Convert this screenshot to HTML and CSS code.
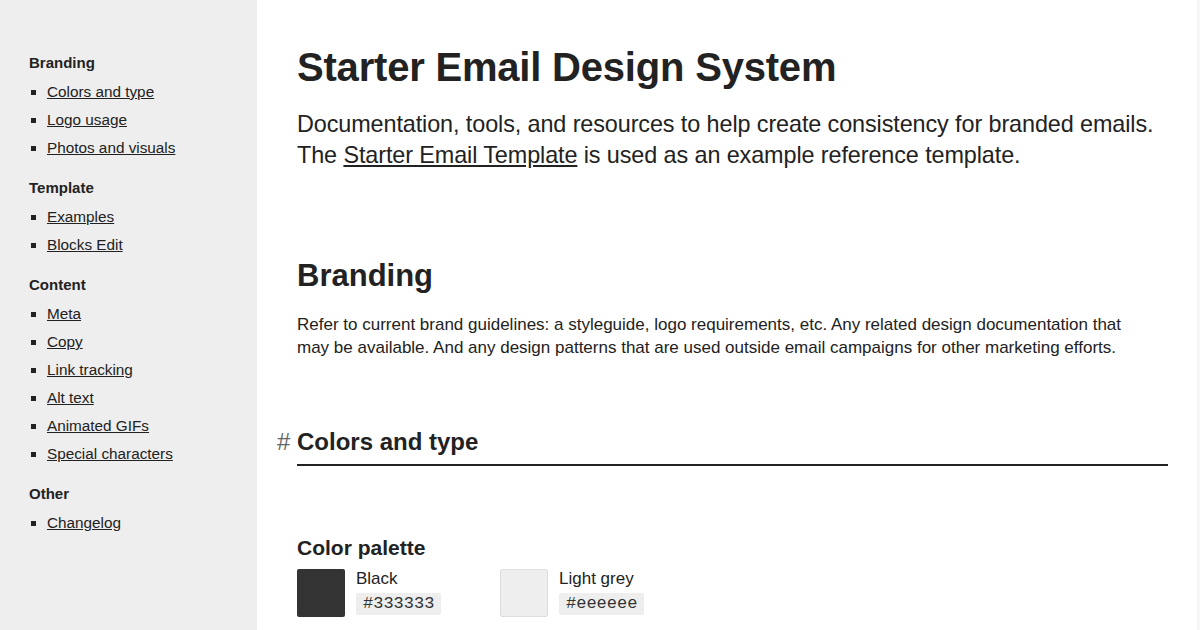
FILE: index.html
```html
<!DOCTYPE html>
<html>
<head>
<meta charset="UTF-8">
<title>Starter Email Design System</title>
<link rel="stylesheet" href="styles.css">
</head>
<body>
<div class="page">
  <nav class="sidebar">
    <h4>Branding</h4>
    <ul>
      <li><a href="#colors">Colors and type</a></li>
      <li><a href="#logo">Logo usage</a></li>
      <li><a href="#photos">Photos and visuals</a></li>
    </ul>
    <h4>Template</h4>
    <ul>
      <li><a href="#examples">Examples</a></li>
      <li><a href="#blocks">Blocks Edit</a></li>
    </ul>
    <h4>Content</h4>
    <ul>
      <li><a href="#meta">Meta</a></li>
      <li><a href="#copy">Copy</a></li>
      <li><a href="#tracking">Link tracking</a></li>
      <li><a href="#alt">Alt text</a></li>
      <li><a href="#gifs">Animated GIFs</a></li>
      <li><a href="#chars">Special characters</a></li>
    </ul>
    <h4>Other</h4>
    <ul>
      <li><a href="#changelog">Changelog</a></li>
    </ul>
  </nav>

  <main class="content">
    <h1>Starter Email Design System</h1>
    <p class="lead">Documentation, tools, and resources to help create consistency for branded emails.<br>
      The <a href="#template">Starter Email Template</a> is used as an example reference template.</p>

    <h2>Branding</h2>
    <p class="text">Refer to current brand guidelines: a styleguide, logo requirements, etc. Any related design documentation that
      may be available. And any design patterns that are used outside email campaigns for other marketing efforts.</p>

    <h3 id="colors"><a class="anchor" href="#colors">#</a>Colors and type</h3>

    <h4 class="sub">Color palette</h4>
    <div class="swatches">
      <div class="swatch">
        <span class="chip chip-black"></span>
        <div class="swatch-info">
          <span class="swatch-name">Black</span>
          <code>#333333</code>
        </div>
      </div>
      <div class="swatch">
        <span class="chip chip-grey"></span>
        <div class="swatch-info">
          <span class="swatch-name">Light grey</span>
          <code>#eeeeee</code>
        </div>
      </div>
    </div>
  </main>
</div>
</body>
</html>
```

FILE: styles.css
```css
body {
  margin: 0;
  font-family: "Liberation Sans", Arial, Helvetica, sans-serif;
  color: #222;
  background: #fff;
}

a {
  color: #222;
  text-decoration: underline;
}

.page {
  display: flex;
  min-height: 630px;
  border-right: 3px solid #f6f6f6;
}

/* sidebar navigation */
.sidebar {
  flex: 0 0 257px;
  box-sizing: border-box;
  background: #eeeeee;
  padding: 54px 0 0 29px;
}

.sidebar h4 {
  margin: 0 0 6px;
  font-size: 15px;
  line-height: 18px;
  font-weight: bold;
}

.sidebar ul {
  list-style: none;
  margin: 0 0 17px;
  padding: 0;
}

.sidebar li {
  position: relative;
  padding-left: 18px;
  font-size: 15.3px;
  line-height: 28px;
}

.sidebar li::before {
  content: "";
  position: absolute;
  left: 2px;
  top: 12px;
  width: 5px;
  height: 5px;
  background: #222;
}

/* main column */
.content {
  flex: 1;
  min-width: 0;
  padding: 45px 29px 0 40px;
}

.content h1 {
  margin: 0 0 20px;
  font-size: 40px;
  line-height: 44px;
  letter-spacing: -0.2px;
}

.content .lead {
  margin: 0 0 87px;
  font-size: 23.4px;
  line-height: 31px;
  letter-spacing: -0.1px;
  white-space: nowrap;
}

.content h2 {
  margin: 0 0 19px;
  font-size: 31px;
  line-height: 36px;
}

.content .text {
  margin: 0;
  max-width: 850px;
  font-size: 17px;
  line-height: 23px;
}

.content h3 {
  position: relative;
  margin: 68px 0 0;
  padding-bottom: 8px;
  font-size: 24px;
  line-height: 29px;
  border-bottom: 2px solid #222;
}

.anchor {
  position: absolute;
  left: -20px;
  color: #666;
  font-weight: normal;
  text-decoration: none;
}

.content h4.sub {
  margin: 69px 0 9px;
  font-size: 21px;
  line-height: 25px;
}

/* colour swatches */
.swatches {
  display: grid;
  grid-template-columns: 203px 203px;
}

.swatch {
  display: flex;
  gap: 11px;
}

.chip {
  width: 48px;
  height: 48px;
  box-sizing: border-box;
  border-radius: 2px;
}

.chip-black {
  background: #333333;
}

.chip-grey {
  background: #eeeeee;
  border: 1px solid #dddddd;
}

.swatch-info {
  display: flex;
  flex-direction: column;
  align-items: flex-start;
  gap: 4px;
}

.swatch-name {
  font-size: 17px;
  line-height: 20px;
}

code {
  font-family: "Liberation Mono", "Courier New", monospace;
  font-size: 17px;
  line-height: 22px;
  padding: 0 7px;
  background: #eeeeee;
  color: #333;
  border-radius: 2px;
}
```
